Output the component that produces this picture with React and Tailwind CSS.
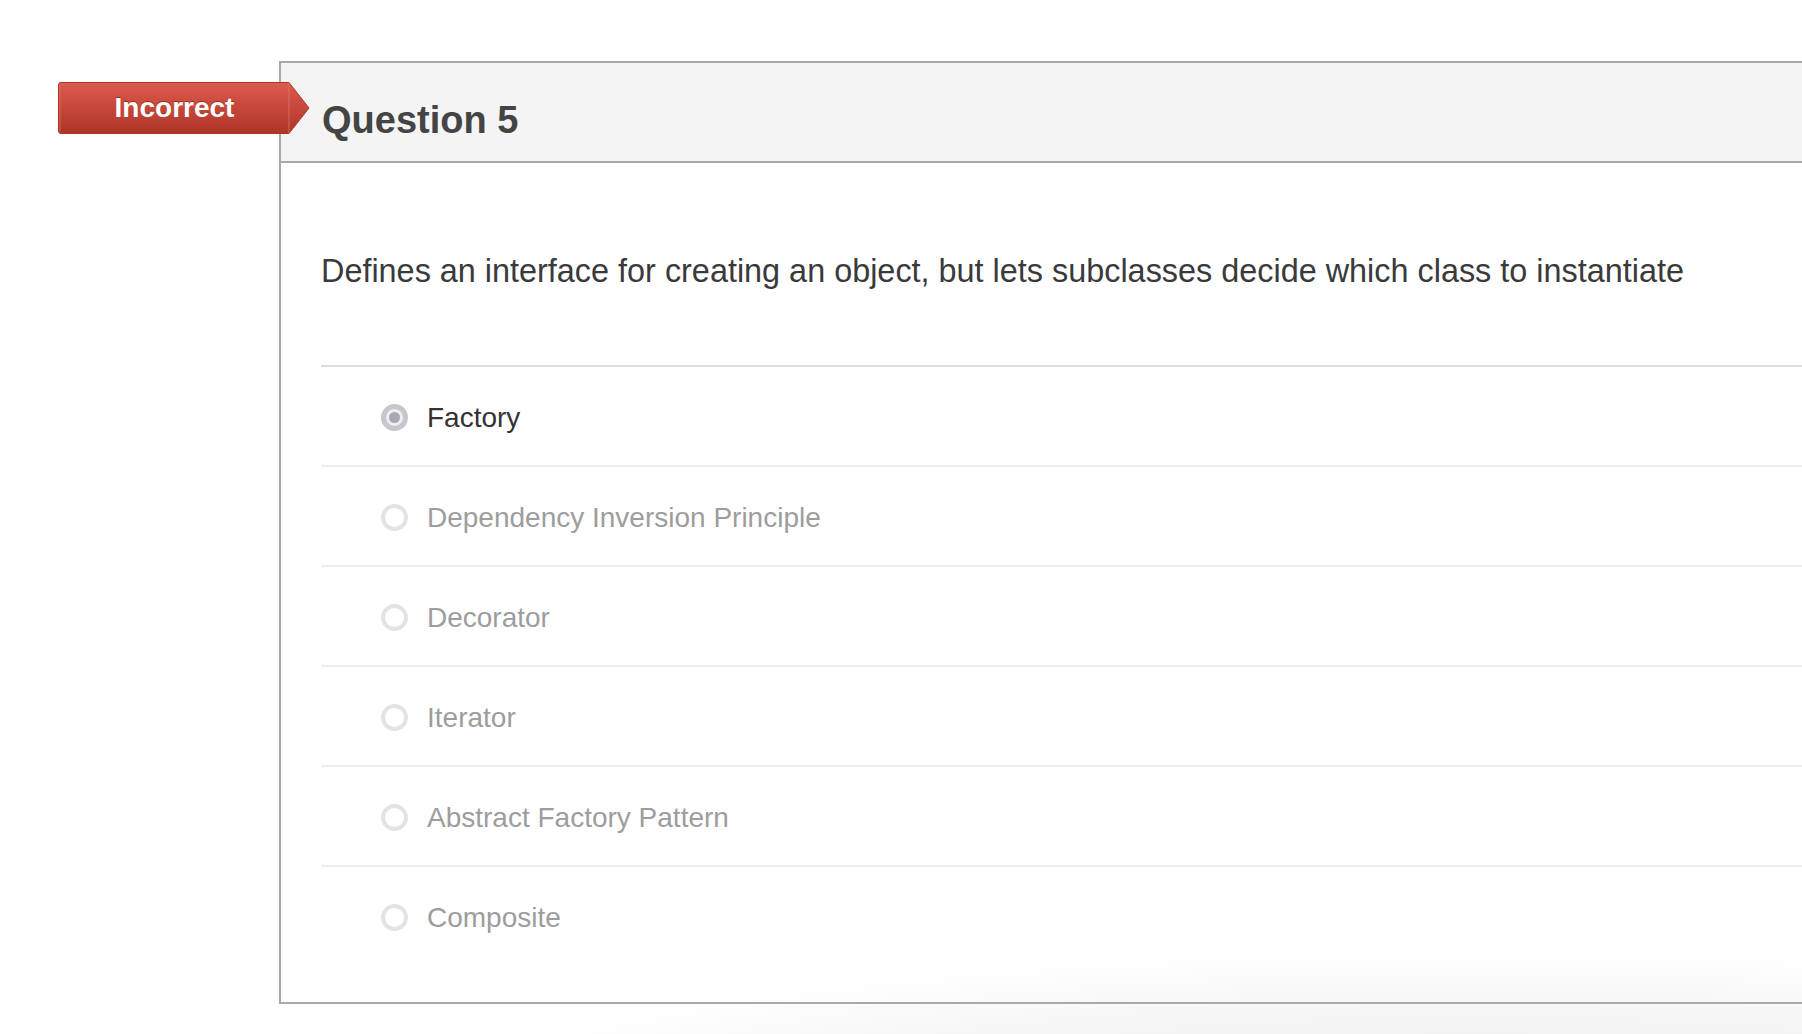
import React from "react";

const options = [
  { label: "Factory", selected: true },
  { label: "Dependency Inversion Principle" },
  { label: "Decorator" },
  { label: "Iterator" },
  { label: "Abstract Factory Pattern" },
  { label: "Composite" },
];

function Radio({ selected }) {
  if (selected) {
    return (
      <span className="flex h-[27px] w-[27px] shrink-0 items-center justify-center rounded-full border-[5px] border-[#c6c6cc] bg-[#eeeef0]">
        <span className="h-[11px] w-[11px] rounded-full bg-[#a8a8b2]" />
      </span>
    );
  }
  return <span className="h-[27px] w-[27px] shrink-0 rounded-full border-[4px] border-[#e3e3e3] bg-white" />;
}

function Badge() {
  return (
    <div className="absolute left-[58px] top-[82px] h-[52px] w-[252px]">
      <svg width="252" height="52" viewBox="0 0 252 52" className="absolute inset-0">
        <defs>
          <linearGradient id="badge" x1="0" y1="0" x2="0" y2="1">
            <stop offset="0" stopColor="#dd5a4d" />
            <stop offset="1" stopColor="#ae3528" />
          </linearGradient>
        </defs>
        <path d="M3 0.5 H231 L251 26 L231 51.5 H3 Q0.5 51.5 0.5 49 V3 Q0.5 0.5 3 0.5 Z" fill="url(#badge)" stroke="#a8382d" />
        <path d="M231 1 V51" stroke="#e9857a" strokeOpacity="0.6" />
        <path d="M2 2 V50" stroke="#e9857a" strokeOpacity="0.5" />
      </svg>
      <div className="relative flex h-full w-[233px] items-center justify-center font-['Liberation_Sans',Arial,sans-serif] text-[28px] font-bold text-white [text-shadow:0_-1px_0_rgba(120,20,10,0.6)]">
        Incorrect
      </div>
    </div>
  );
}

export default function App() {
  return (
    <div className="relative h-[1034px] overflow-hidden bg-white bg-[radial-gradient(1100px_170px_at_82%_108%,#e6e6e6,rgba(255,255,255,0))] font-['Liberation_Sans',Arial,sans-serif]">
      <div className="flex pt-[61px]">
        <div className="ml-[279px] flex-1 border-y-2 border-l-2 border-[#a9a9a9]">
          <div className="h-[100px] border-b-2 border-[#a9a9a9] bg-[#f4f4f4] pl-[41px] pt-[38px]">
            <h2 className="text-[38px] font-bold leading-none text-[#444]">Question 5</h2>
          </div>
          <div className="pl-[40px] pt-[89px] pb-[37px]">
            <p className="mb-[75px] text-[32.4px] leading-[38px] text-[#3a3a3a]">
              Defines an interface for creating an object, but lets subclasses decide which class to instantiate
            </p>
            <div>
              {options.map((o, i) => (
                <label
                  key={o.label}
                  className={`flex h-[100px] items-center gap-[19px] border-t-2 pl-[60px] pt-[3px] ${i === 0 ? "border-[#dcdcdc]" : "border-[#ececec]"}`}
                >
                  <Radio selected={o.selected} />
                  <span className={`text-[28px] leading-none ${o.selected ? "text-[#333]" : "text-[#9d9d9d]"}`}>{o.label}</span>
                </label>
              ))}
            </div>
          </div>
        </div>
      </div>
      <Badge />
    </div>
  );
}
